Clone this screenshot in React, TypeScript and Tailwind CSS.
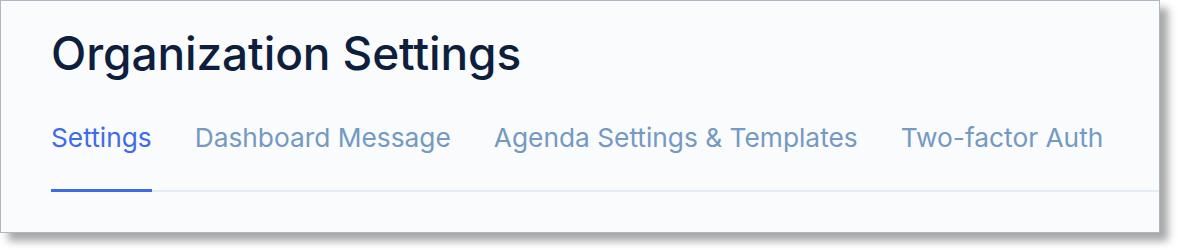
import React from "react";

const tabs = ["Settings", "Dashboard Message", "Agenda Settings & Templates", "Two-factor Auth"];

export default function App() {
  return (
    <div className="w-[1178px] h-[250px] bg-white" style={{ fontFamily: "Inter, 'Noto Sans', sans-serif" }}>
      <div className="w-[1160px] h-[233px] bg-[#f9fbfd] border border-[#aeb7c4] shadow-[8px_8px_8px_rgba(0,0,0,0.35)] pl-[50px] pt-[24px]">
        <h1 className="text-[46px] leading-[56px] font-medium text-[#0e1f3e] tracking-[-0.1px]">Organization Settings</h1>
        <div className="mt-[41px] flex gap-[43px] border-b-2 border-[#e3ebf5]">
          {tabs.map((t, i) => (
            <div
              key={t}
              className={
                "pb-[35px] -mb-[2px] text-[26.3px] leading-[32px] " +
                (i === 0 ? "text-[#3d6ce9] border-b-[3px] border-[#3d6ce9]" : "text-[#7499c2] border-b-[3px] border-transparent")
              }
            >
              {t}
            </div>
          ))}
        </div>
      </div>
    </div>
  );
}
